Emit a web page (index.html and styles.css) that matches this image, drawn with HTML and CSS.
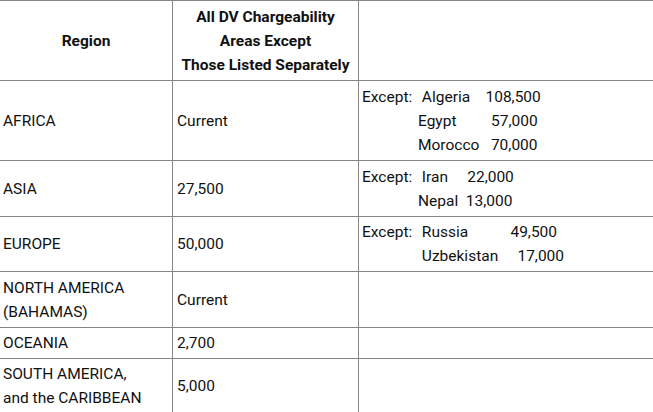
FILE: index.html
```html
<!DOCTYPE html>
<html>
<head>
<meta charset="utf-8">
<link rel="stylesheet" href="styles.css">
</head>
<body>
<table class="quota">
  <colgroup>
    <col class="c1"><col class="c2"><col class="c3">
  </colgroup>
  <thead>
    <tr class="r-head">
      <th>Region</th>
      <th>All DV Chargeability<br>Areas Except<br>Those Listed Separately</th>
      <th></th>
    </tr>
  </thead>
  <tbody>
    <tr class="r-africa">
      <td>AFRICA</td>
      <td>Current</td>
      <td>
        <div class="ex"><span class="lbl">Except:</span><span class="rest"> Algeria    108,500</span></div>
        <div class="ex"><span class="lbl"></span><span class="rest">Egypt         57,000</span></div>
        <div class="ex"><span class="lbl"></span><span class="rest">Morocco   70,000</span></div>
      </td>
    </tr>
    <tr class="r-asia">
      <td>ASIA</td>
      <td>27,500</td>
      <td>
        <div class="ex"><span class="lbl">Except:</span><span class="rest"> Iran     22,000</span></div>
        <div class="ex"><span class="lbl"></span><span class="rest">Nepal  13,000</span></div>
      </td>
    </tr>
    <tr class="r-europe">
      <td>EUROPE</td>
      <td>50,000</td>
      <td>
        <div class="ex"><span class="lbl">Except:</span><span class="rest"> Russia           49,500</span></div>
        <div class="ex"><span class="lbl"></span><span class="rest"> Uzbekistan     17,000</span></div>
      </td>
    </tr>
    <tr class="r-na">
      <td>NORTH AMERICA<br>(BAHAMAS)</td>
      <td>Current</td>
      <td></td>
    </tr>
    <tr class="r-oc">
      <td>OCEANIA</td>
      <td>2,700</td>
      <td></td>
    </tr>
    <tr class="r-sa">
      <td>SOUTH AMERICA,<br>and the CARIBBEAN</td>
      <td>5,000</td>
      <td></td>
    </tr>
  </tbody>
</table>
</body>
</html>
```

FILE: styles.css
```css
html, body {
  margin: 0;
  padding: 0;
  background: #ffffff;
  overflow: hidden;
}

body {
  font-family: Roboto, "Liberation Sans", sans-serif;
  font-size: 15.5px;
  line-height: 24px;
  color: #111111;
}

.quota {
  border-collapse: separate;
  border-spacing: 0;
  table-layout: fixed;
  width: 720px;
  border-top: 1px solid #858585;
}

.c1 { width: 173px; }
.c2 { width: 186px; }
.c3 { width: 361px; }

.quota th,
.quota td {
  padding: 3px 3px 3px 3px;
  vertical-align: middle;
  text-align: left;
  border-right: 1px solid #858585;
  border-bottom: 1px solid #858585;
}

.quota th {
  font-weight: 700;
  text-align: center;
  padding-top: 3.5px;
  padding-bottom: 3.5px;
}

.quota td:nth-child(2) {
  padding-left: 4px;
}

.r-africa td,
.r-asia td,
.r-na td {
  padding-top: 3.5px;
  padding-bottom: 3.5px;
}

.ex {
  white-space: pre;
}

.lbl {
  display: inline-block;
  width: 56px;
}
```
